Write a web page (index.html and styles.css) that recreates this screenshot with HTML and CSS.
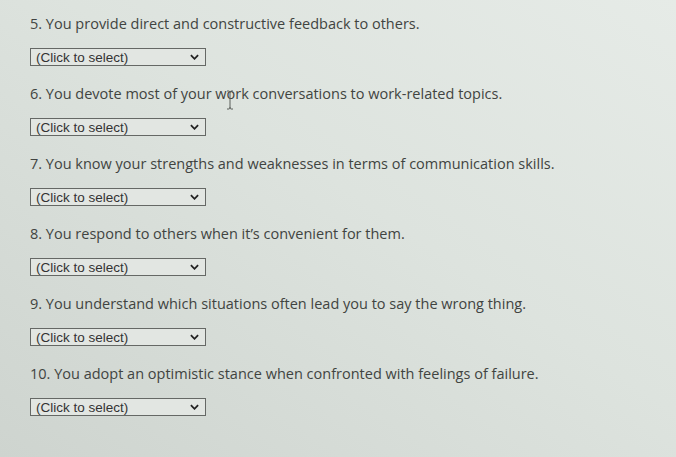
FILE: index.html
```html
<!DOCTYPE html>
<html>
<head>
<meta charset="utf-8">
<link rel="stylesheet" href="styles.css">
</head>
<body>
<div class="page">
  <div class="item">
    <p class="q">5. You provide direct and constructive feedback to others.</p>
    <div class="sel"><span>(Click to select)</span><svg class="chev" viewBox="0 0 10 6" width="9" height="6"><path d="M1 1 L5 5 L9 1" fill="none" stroke="#222" stroke-width="2"/></svg></div>
  </div>
  <div class="item">
    <p class="q">6. You devote most of your work conversations to work-related topics.</p>
    <div class="sel"><span>(Click to select)</span><svg class="chev" viewBox="0 0 10 6" width="9" height="6"><path d="M1 1 L5 5 L9 1" fill="none" stroke="#222" stroke-width="2"/></svg></div>
    <svg class="cursor" viewBox="0 0 8 20" width="8" height="20"><path d="M1 1 H3 Q4 1 4 3 V17 Q4 19 3 19 H1 M7 1 H5 Q4 1 4 3 M4 17 Q4 19 5 19 H7" fill="none" stroke="#5a5e5a" stroke-width="1"/></svg>
  </div>
  <div class="item">
    <p class="q">7. You know your strengths and weaknesses in terms of communication skills.</p>
    <div class="sel"><span>(Click to select)</span><svg class="chev" viewBox="0 0 10 6" width="9" height="6"><path d="M1 1 L5 5 L9 1" fill="none" stroke="#222" stroke-width="2"/></svg></div>
  </div>
  <div class="item">
    <p class="q">8. You respond to others when it’s convenient for them.</p>
    <div class="sel"><span>(Click to select)</span><svg class="chev" viewBox="0 0 10 6" width="9" height="6"><path d="M1 1 L5 5 L9 1" fill="none" stroke="#222" stroke-width="2"/></svg></div>
  </div>
  <div class="item">
    <p class="q">9. You understand which situations often lead you to say the wrong thing.</p>
    <div class="sel"><span>(Click to select)</span><svg class="chev" viewBox="0 0 10 6" width="9" height="6"><path d="M1 1 L5 5 L9 1" fill="none" stroke="#222" stroke-width="2"/></svg></div>
  </div>
  <div class="item">
    <p class="q">10. You adopt an optimistic stance when confronted with feelings of failure.</p>
    <div class="sel"><span>(Click to select)</span><svg class="chev" viewBox="0 0 10 6" width="9" height="6"><path d="M1 1 L5 5 L9 1" fill="none" stroke="#222" stroke-width="2"/></svg></div>
  </div>
</div>
</body>
</html>
```

FILE: styles.css
```css
html, body {
  margin: 0;
  padding: 0;
  height: 100%;
}
body {
  background: linear-gradient(to bottom left, #e6ebe7 0%, #dde3de 45%, #ced4cf 100%);
  font-family: "Open Sans", Lato, sans-serif;
  color: #414441;
  overflow: hidden;
}
.page {
  display: flex;
  flex-direction: column;
  gap: 18px;
  padding: 14px 0 0 30px;
}
.item {
  position: relative;
  display: flex;
  flex-direction: column;
  gap: 14px;
}
.q {
  margin: 0;
  font-size: 14.5px;
  line-height: 20px;
  height: 20px;
}
.sel {
  box-sizing: border-box;
  width: 176px;
  height: 18px;
  border: 1px solid #656865;
  background: #e2e6e2;
  display: flex;
  align-items: center;
  justify-content: space-between;
  padding: 0 6px 0 5px;
  font-family: "Liberation Sans", Arial, sans-serif;
  font-size: 13.5px;
  color: #333;
}
.chev {
  display: block;
}
.cursor {
  position: absolute;
  left: 196px;
  top: 6px;
}
```
